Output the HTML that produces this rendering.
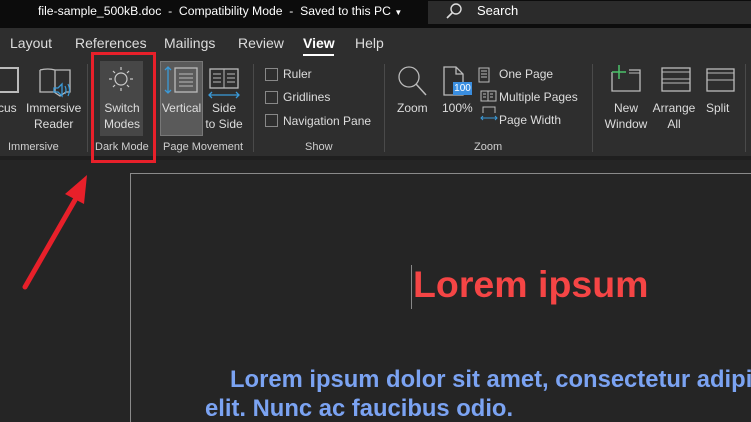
<!DOCTYPE html>
<html><head><style>
*{margin:0;padding:0;box-sizing:border-box}
html,body{width:751px;height:422px;overflow:hidden}
body{background:#252525;font-family:"Segoe UI","Liberation Sans",sans-serif;color:#e6e6e6;position:relative}
.a{position:absolute;white-space:nowrap}
.t{font-size:12.2px;color:#fff}
.s{font-size:12px;color:#ddd;text-align:center;line-height:16px}
.g{font-size:11px;color:#cfcfcf}
.cb{position:absolute;width:13px;height:13px;border:1px solid #888}
.sep{position:absolute;top:64px;width:1px;height:88px;background:#4a4a4a}
</style></head><body>
<div class="a" style="left:0;top:0;width:751px;height:28px;background:#0c0c0c"></div>
<div class="a" style="left:428px;top:1px;width:323px;height:23px;background:#2b2b2b"></div>
<div class="a t" style="left:38px;top:4px">file-sample_500kB.doc&nbsp; - &nbsp;Compatibility Mode&nbsp; - &nbsp;Saved to this PC <span style="font-size:8px">▼</span></div>
<svg class="a" style="left:444px;top:2px" width="20" height="18"><circle cx="12" cy="7" r="5" fill="none" stroke="#ddd" stroke-width="1.4"/><line x1="8.5" y1="10.5" x2="3" y2="16" stroke="#ddd" stroke-width="1.6"/></svg>
<div class="a t" style="left:477px;top:3px;font-size:13px">Search</div>
<div class="a" style="left:0;top:28px;width:751px;height:128px;background:#2e2e2e"></div>
<div class="a" style="left:0;top:156px;width:751px;height:4px;background:#1f1f1f"></div>
<div class="a" style="top:35px;left:10px;font-size:14px;color:#ddd">Layout</div>
<div class="a" style="top:35px;left:75px;font-size:14px;color:#ddd">References</div>
<div class="a" style="top:35px;left:164px;font-size:14px;color:#ddd">Mailings</div>
<div class="a" style="top:35px;left:238px;font-size:14px;color:#ddd">Review</div>
<div class="a" style="top:35px;left:303px;font-size:14px;color:#fff;font-weight:bold">View</div>
<div class="a" style="left:303px;top:54px;width:31px;height:2px;background:#fff"></div>
<div class="a" style="top:35px;left:355px;font-size:14px;color:#ddd">Help</div>
<svg class="a" style="left:0;top:66px" width="80" height="32"><path d="M0 2H18V26H0" fill="none" stroke="#bbb" stroke-width="2"/><path d="M40 4V26H54L60 30L66 26H70V4H55V26M55 4 Q48 2 40 4" fill="none" stroke="#bbb" stroke-width="1.3"/><path d="M54 22h4l4-4v12l-4-4h-4z" fill="none" stroke="#3a9ad9" stroke-width="1.3"/><path d="M65 20q2 4 0 8M68 18q3 6 0 12" fill="none" stroke="#3a9ad9" stroke-width="1.2"/></svg>
<div class="a s" style="left:-2px;top:100px">cus</div>
<div class="a s" style="left:26px;top:100px">Immersive<br>Reader</div>
<div class="a g" style="left:8px;top:141px">Immersive</div>
<div class="sep" style="left:87px"></div>
<div class="a" style="left:100px;top:61px;width:43px;height:75px;background:#474747"></div>
<svg class="a" style="left:106px;top:66px" width="30" height="26"><circle cx="15" cy="13" r="6" fill="none" stroke="#ccc" stroke-width="1.2"/><g stroke="#ccc" stroke-width="1.2"><line x1="15" y1="1" x2="15" y2="4"/><line x1="15" y1="22" x2="15" y2="25"/><line x1="3" y1="13" x2="6" y2="13"/><line x1="24" y1="13" x2="27" y2="13"/><line x1="7" y1="5" x2="9" y2="7"/><line x1="21" y1="19" x2="23" y2="21"/><line x1="23" y1="5" x2="21" y2="7"/><line x1="9" y1="19" x2="7" y2="21"/></g></svg>
<div class="a s" style="left:102px;top:100px;width:40px">Switch<br>Modes</div>
<div class="a g" style="left:95px;top:141px">Dark Mode</div>
<div class="a" style="left:160px;top:61px;width:43px;height:75px;background:#5a5a5a;border:1px solid #777"></div>
<svg class="a" style="left:163px;top:66px" width="80" height="36"><path d="M5 1V27M2 4L5 1L8 4M2 24L5 27L8 24" fill="none" stroke="#3a9ad9" stroke-width="1.3"/><rect x="12" y="2" width="22" height="24" fill="none" stroke="#bbb" stroke-width="1.3"/><path d="M16 8h14M16 12h14M16 16h14M16 20h14" stroke="#bbb"/><rect x="47" y="3" width="28" height="19" fill="none" stroke="#bbb" stroke-width="1.3"/><path d="M61 3v19M50 8h8M50 12h8M50 16h8M64 8h8M64 12h8M64 16h8" stroke="#bbb"/><path d="M46 29h30M49 26l-3 3 3 3M73 26l3 3-3 3" fill="none" stroke="#3a9ad9" stroke-width="1.3"/></svg>
<div class="a s" style="left:160px;top:100px;width:43px">Vertical</div>
<div class="a s" style="left:205px;top:100px;width:38px">Side<br>to Side</div>
<div class="a g" style="left:163px;top:141px">Page Movement</div>
<div class="sep" style="left:253px"></div>
<div class="cb" style="left:265px;top:68px"></div><div class="a s" style="left:283px;top:66px">Ruler</div>
<div class="cb" style="left:265px;top:91px"></div><div class="a s" style="left:283px;top:89px">Gridlines</div>
<div class="cb" style="left:265px;top:114px"></div><div class="a s" style="left:283px;top:113px">Navigation Pane</div>
<div class="a g" style="left:305px;top:141px">Show</div>
<div class="sep" style="left:384px"></div>
<svg class="a" style="left:396px;top:65px" width="100" height="60"><circle cx="13" cy="12" r="10" fill="none" stroke="#bbb" stroke-width="1.3"/><line x1="20" y1="19" x2="30" y2="30" stroke="#bbb" stroke-width="1.5"/><path d="M48 2H60L67 9V30H48Z M60 2V9H67" fill="none" stroke="#bbb" stroke-width="1.3"/><rect x="83" y="3" width="10" height="14" fill="none" stroke="#bbb"/><path d="M85 6h6M85 9h6M85 12h6" stroke="#bbb"/></svg>
<div class="a" style="left:453px;top:82px;width:19px;height:13px;background:#3a8ee0;color:#fff;font-size:10px;text-align:center;line-height:13px">100</div>
<div class="a s" style="left:397px;top:100px">Zoom</div>
<div class="a s" style="left:442px;top:100px">100%</div>
<div class="a s" style="left:499px;top:66px">One Page</div>
<svg class="a" style="left:480px;top:89px" width="18" height="40"><rect x="1" y="2" width="15" height="10" fill="none" stroke="#bbb"/><path d="M8 2v10M3 5h3M3 8h3M10 5h3M10 8h3" stroke="#bbb"/><path d="M3 24V18H15V24" fill="none" stroke="#bbb"/><path d="M1 29h16M3 27l-2 2 2 2M15 27l2 2-2 2" fill="none" stroke="#3a9ad9"/></svg>
<div class="a s" style="left:499px;top:89px">Multiple Pages</div>
<div class="a s" style="left:499px;top:112px">Page Width</div>
<div class="a g" style="left:474px;top:141px">Zoom</div>
<div class="sep" style="left:592px"></div>
<svg class="a" style="left:608px;top:64px" width="130" height="32"><path d="M4 8V27H32V6H21" fill="none" stroke="#bbb" stroke-width="1.3"/><path d="M21 9H32" stroke="#bbb"/><path d="M11 1V15M4 8H18" stroke="#4cc26a" stroke-width="1.5"/><rect x="54" y="4" width="28" height="23" fill="none" stroke="#bbb" stroke-width="1.3"/><path d="M54 8h28M54 15h28M54 19h28" stroke="#bbb"/><rect x="99" y="5" width="27" height="22" fill="none" stroke="#bbb" stroke-width="1.3"/><path d="M99 9h27M99 16h27" stroke="#bbb"/></svg>
<div class="a s" style="left:602px;top:100px;width:48px">New<br>Window</div>
<div class="a s" style="left:651px;top:100px;width:46px">Arrange<br>All</div>
<div class="a s" style="left:706px;top:100px">Split</div>
<div class="sep" style="left:745px"></div>
<div class="a" style="left:130px;top:173px;width:621px;height:249px;border-left:1px solid #8a8a8a;border-top:1px solid #8a8a8a;background:#252525;overflow:hidden">
<div class="a" style="left:280px;top:91px;width:1px;height:44px;background:#888"></div>
<div class="a" style="left:282px;top:89px;font-family:'Liberation Sans',sans-serif;font-weight:bold;font-size:37.5px;color:#f54545">Lorem ipsum</div>
<div class="a" style="left:99px;top:192px;font-family:'Liberation Sans',sans-serif;font-weight:bold;font-size:23.8px;color:#7ba3f2">Lorem ipsum dolor sit amet, consectetur adipiscing</div>
<div class="a" style="left:74px;top:221px;font-family:'Liberation Sans',sans-serif;font-weight:bold;font-size:23.8px;color:#7ba3f2">elit. Nunc ac faucibus odio.</div>
</div>
<div class="a" style="left:91px;top:52px;width:65px;height:111px;border:3px solid #e8202a"></div>
<svg class="a" style="left:0;top:150px" width="100" height="150"><line x1="25" y1="137" x2="75" y2="50" stroke="#e8202a" stroke-width="5" stroke-linecap="round"/><polygon points="87,25 84,54 65,44" fill="#e8202a"/></svg>
</body></html>
